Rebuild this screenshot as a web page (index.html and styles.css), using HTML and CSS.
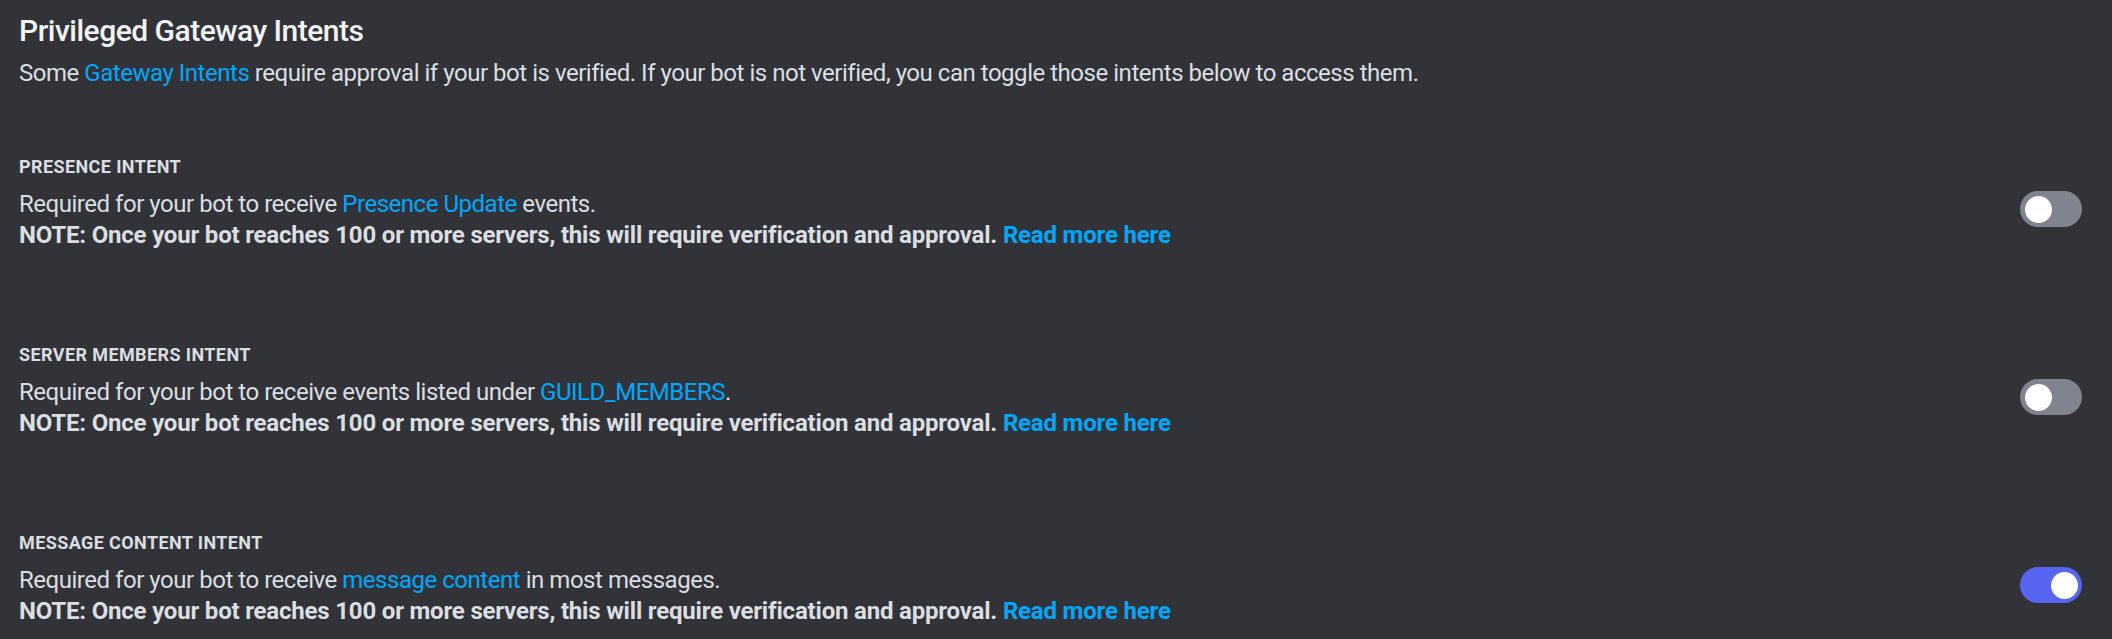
FILE: index.html
```html
<!DOCTYPE html>
<html lang="en">
<head>
<meta charset="utf-8">
<title>Privileged Gateway Intents</title>
<link rel="stylesheet" href="styles.css">
</head>
<body>
<main class="page">
  <h2 class="title">Privileged Gateway Intents</h2>
  <p class="intro">Some <a class="link" href="#">Gateway Intents</a> require approval if your bot is verified. If your bot is not verified, you can toggle those intents below to access them.</p>

  <section class="intent">
    <div class="intent-text">
      <h3 class="label">Presence Intent</h3>
      <p class="desc">Required for your bot to receive <a class="link" href="#">Presence Update</a> events.</p>
      <p class="note">NOTE: Once your bot reaches 100 or more servers, this will require verification and approval. <a class="link" href="#">Read more here</a></p>
    </div>
    <div class="switch"><span class="knob"></span></div>
  </section>

  <section class="intent">
    <div class="intent-text">
      <h3 class="label">Server Members Intent</h3>
      <p class="desc">Required for your bot to receive events listed under <a class="link" href="#">GUILD_MEMBERS</a>.</p>
      <p class="note">NOTE: Once your bot reaches 100 or more servers, this will require verification and approval. <a class="link" href="#">Read more here</a></p>
    </div>
    <div class="switch"><span class="knob"></span></div>
  </section>

  <section class="intent">
    <div class="intent-text">
      <h3 class="label">Message Content Intent</h3>
      <p class="desc">Required for your bot to receive <a class="link" href="#">message content</a> in most messages.</p>
      <p class="note">NOTE: Once your bot reaches 100 or more servers, this will require verification and approval. <a class="link" href="#">Read more here</a></p>
    </div>
    <div class="switch on"><span class="knob"></span></div>
  </section>
</main>
</body>
</html>
```
FILE: styles.css
```css
html, body {
  margin: 0;
  padding: 0;
  background: #313338;
}

.page {
  padding: 13px 30px 0 19px;
  font-family: "Roboto", "Liberation Sans", sans-serif;
  color: #dbdee1;
}

.title {
  margin: 0;
  font-size: 30px;
  line-height: 36px;
  font-weight: 500;
  letter-spacing: -0.5px;
  color: #f2f3f5;
}

.intro {
  margin: 9px 0 0;
  font-size: 24px;
  line-height: 31px;
  letter-spacing: -0.47px;
  white-space: nowrap;
}

.link {
  color: #00a8fc;
  text-decoration: none;
}

.intent {
  display: flex;
  justify-content: space-between;
  align-items: flex-start;
  margin-top: 92px;
}

.intent:first-of-type {
  margin-top: 66px;
}

.label {
  margin: 0;
  font-size: 18px;
  line-height: 24px;
  font-weight: 700;
  text-transform: uppercase;
  letter-spacing: 0.4px;
  color: #dbdee1;
}

.desc {
  margin: 10px 0 0;
  font-size: 24px;
  line-height: 31px;
  letter-spacing: -0.47px;
}

.note {
  margin: 0;
  font-size: 24px;
  line-height: 31px;
  font-weight: 700;
  letter-spacing: -0.19px;
}

.switch {
  flex: none;
  position: relative;
  width: 62px;
  height: 36px;
  margin-top: 36px;
  border-radius: 18px;
  background: #80848e;
}

.switch.on {
  background: #5865f2;
}

.knob {
  position: absolute;
  top: 4.5px;
  left: 5px;
  width: 27px;
  height: 27px;
  border-radius: 50%;
  background: #ffffff;
}

.switch.on .knob {
  left: 31px;
}
```
